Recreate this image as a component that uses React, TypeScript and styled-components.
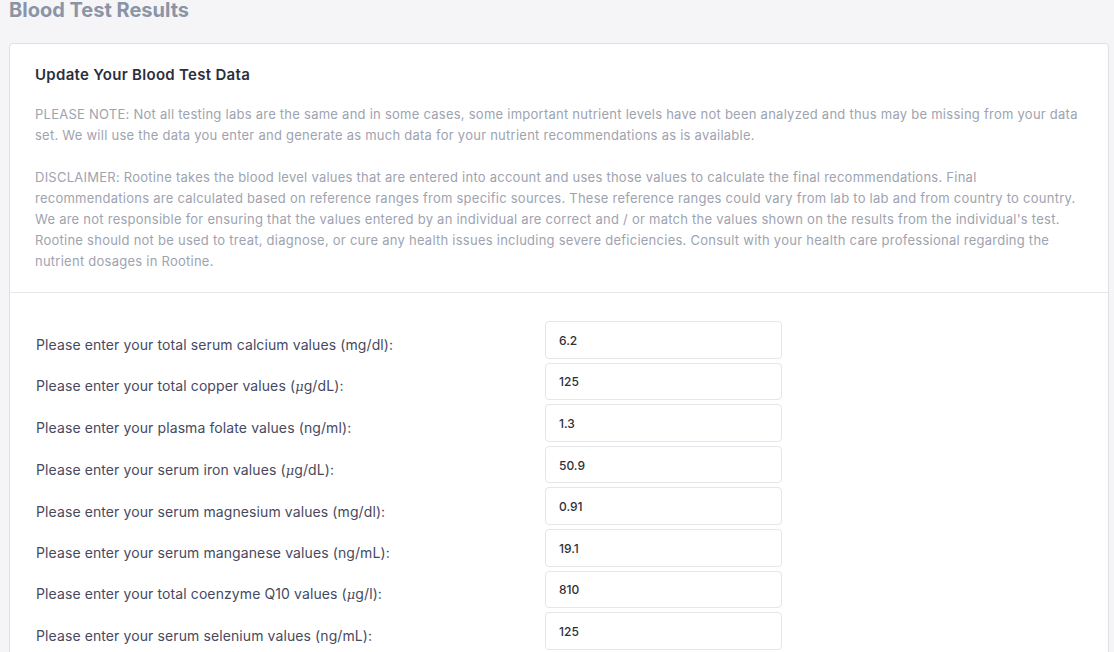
import React from "react";
import styled, { createGlobalStyle } from "styled-components";

const GlobalStyle = createGlobalStyle`
  html, body {
    margin: 0;
    padding: 0;
    background: #f5f5f7;
  }
  body {
    font-family: Inter, "Noto Sans", "Liberation Sans", sans-serif;
    -webkit-font-smoothing: antialiased;
  }
`;

const Page = styled.div`
  padding: 0 5px 0 9px;
`;

const PageTitle = styled.h1`
  margin: 0 0 23px;
  font-size: 20px;
  line-height: 20px;
  font-weight: 700;
  color: #8a94a6;
  letter-spacing: 0;
`;

const Card = styled.section`
  background: #ffffff;
  border: 1px solid #dfe0e5;
  border-radius: 4px;
`;

const CardHeader = styled.div`
  padding: 20px 25px 20px;
  border-bottom: 1px solid #e6e7ec;
`;

const CardTitle = styled.h2`
  margin: 0 0 18px;
  font-size: 15px;
  line-height: 22px;
  font-weight: 600;
  color: #2c2e3b;
  letter-spacing: 0.3px;
`;

const Note = styled.p`
  margin: 0 0 21px;
  font-size: 13px;
  line-height: 21px;
  font-weight: 400;
  color: #9ea3b0;
  letter-spacing: 0.25px;
  &:last-child {
    margin-bottom: 0;
  }
`;

const CardBody = styled.div`
  padding: 28px 25px 20px;
`;

const Row = styled.div`
  display: grid;
  grid-template-columns: 510px 237px;
  align-items: center;
  margin-bottom: 4px;
`;

const Label = styled.label`
  padding-top: 11px;
  padding-left: 1px;
  font-size: 14px;
  line-height: 20px;
  color: #474a5f;
  letter-spacing: 0.1px;
`;

const Mu = styled.span`
  font-family: "DejaVu Serif", "Liberation Serif", serif;
  font-style: italic;
  font-size: 13px;
`;

const ValueInput = styled.input`
  box-sizing: border-box;
  width: 237px;
  height: 37.6px;
  padding: 1px 13px 0;
  border: 1px solid #e5e6ec;
  border-radius: 4px;
  background: #ffffff;
  font-family: Inter, "Noto Sans", "Liberation Sans", sans-serif;
  font-size: 12px;
  font-weight: 500;
  color: #2f3036;
  outline: none;
`;

type Field = { id: string; before: string; unit: React.ReactNode; value: string };

const mu = <Mu>μ</Mu>;

const fields: Field[] = [
  { id: "calcium", before: "Please enter your total serum calcium values ", unit: "(mg/dl):", value: "6.2" },
  { id: "copper", before: "Please enter your total copper values ", unit: <>({mu}g/dL):</>, value: "125" },
  { id: "folate", before: "Please enter your plasma folate values ", unit: "(ng/ml):", value: "1.3" },
  { id: "iron", before: "Please enter your serum iron values ", unit: <>({mu}g/dL):</>, value: "50.9" },
  { id: "magnesium", before: "Please enter your serum magnesium values ", unit: "(mg/dl):", value: "0.91" },
  { id: "manganese", before: "Please enter your serum manganese values ", unit: "(ng/mL):", value: "19.1" },
  { id: "coq10", before: "Please enter your total coenzyme Q10 values ", unit: <>({mu}g/l):</>, value: "810" },
  { id: "selenium", before: "Please enter your serum selenium values ", unit: "(ng/mL):", value: "125" },
];

export default function App() {
  return (
    <>
      <GlobalStyle />
      <Page>
        <PageTitle>Blood Test Results</PageTitle>
        <Card>
          <CardHeader>
            <CardTitle>Update Your Blood Test Data</CardTitle>
            <Note>
              PLEASE NOTE: Not all testing labs are the same and in some cases, some important nutrient levels have not
              been analyzed and thus may be missing from your data set. We will use the data you enter and generate as
              much data for your nutrient recommendations as is available.
            </Note>
            <Note>
              DISCLAIMER: Rootine takes the blood level values that are entered into account and uses those values to
              calculate the final recommendations. Final recommendations are calculated based on reference ranges from
              specific sources. These reference ranges could vary from lab to lab and from country to country. We are not
              responsible for ensuring that the values entered by an individual are correct and / or match the values
              shown on the results from the individual's test. Rootine should not be used to treat, diagnose, or cure any
              health issues including severe deficiencies. Consult with your health care professional regarding the
              nutrient dosages in Rootine.
            </Note>
          </CardHeader>
          <CardBody>
            {fields.map((f) => (
              <Row key={f.id}>
                <Label htmlFor={f.id}>
                  {f.before}
                  {f.unit}
                </Label>
                <ValueInput id={f.id} defaultValue={f.value} />
              </Row>
            ))}
          </CardBody>
        </Card>
      </Page>
    </>
  );
}
